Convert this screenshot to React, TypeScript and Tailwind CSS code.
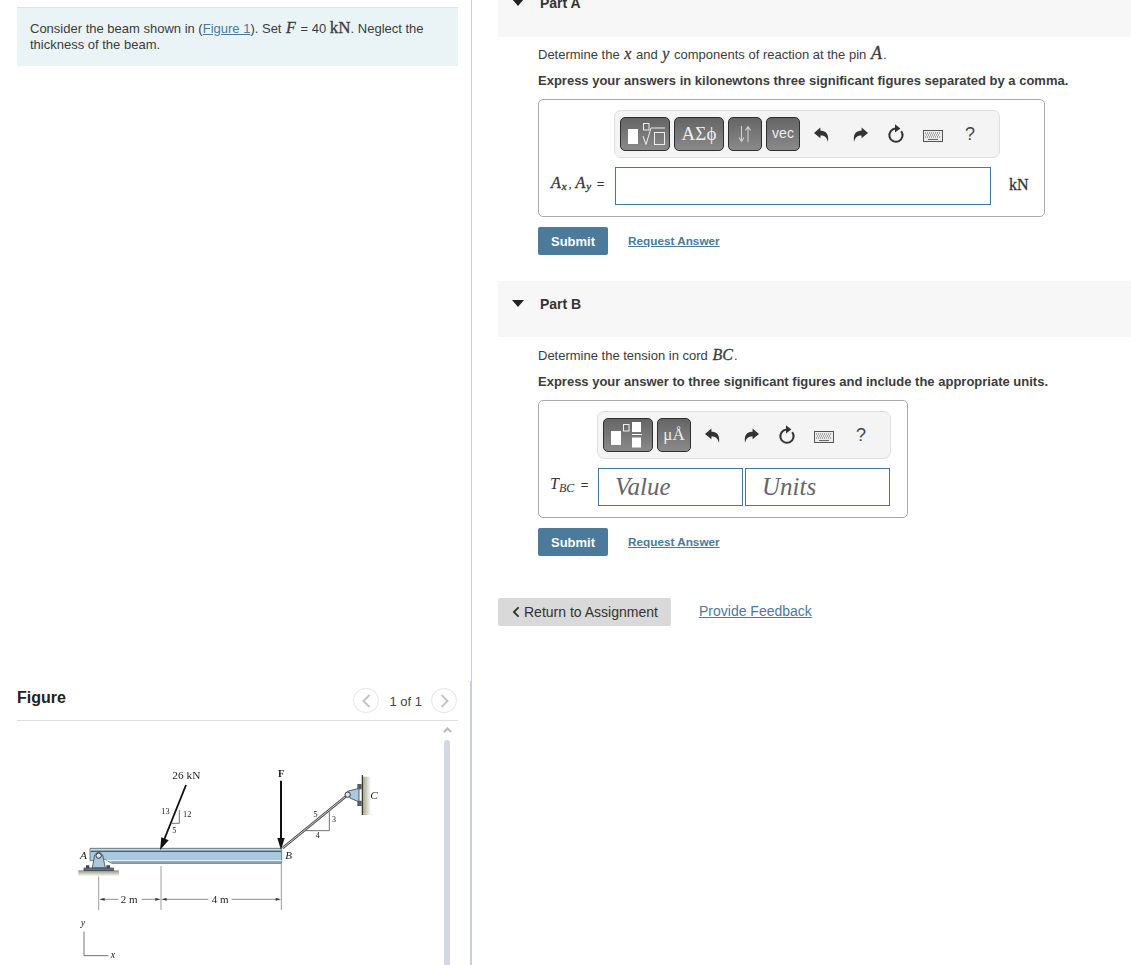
import React from "react";
import { FaChevronLeft } from "react-icons/fa";

const serif = "font-['Liberation_Serif',serif]";

function M({ children }: { children: React.ReactNode }) {
  return (
    <span className="font-['Liberation_Serif',serif] italic text-[16px] leading-[0] [-webkit-text-stroke:0.3px] mx-[1px]">
      {children}
    </span>
  );
}

function ToolBtn({ w, children }: { w: string; children: React.ReactNode }) {
  return (
    <div
      className={`${w} h-[34px] shrink-0 rounded-[5px] border border-[#2e2e2e] bg-linear-to-b from-[#656565] to-[#8a8a8a] flex items-center justify-center text-[#eeeeee]`}
    >
      {children}
    </div>
  );
}

function UndoIcon({ flip }: { flip?: boolean }) {
  return (
    <svg width="15" height="15" viewBox="0 0 14 14" className={flip ? "-scale-x-100" : ""}>
      <path d="M0 5.5L6 0.5V3.5C11 3.5 14.2 6.5 13 13.7C12 9.8 10 8 6 8V10.5Z" fill="#333" />
    </svg>
  );
}

function ResetIcon() {
  return (
    <svg width="18" height="20" viewBox="0 0 18 20">
      <path d="M8.5 4.6A6.6 6.6 0 1 0 14.2 7.2" fill="none" stroke="#333" strokeWidth="2" />
      <path d="M8 0.3L13.4 4.5L8 8.5Z" fill="#333" />
    </svg>
  );
}

function KeyboardIcon() {
  return (
    <svg width="20" height="12" viewBox="0 0 20 12" className="mt-[3px]">
      <rect x="0.5" y="0.5" width="19" height="11" fill="#ececec" stroke="#555" />
      <path d="M2 3h16M3 5h14M2 7h16" stroke="#666" strokeWidth="1" strokeDasharray="1 1" />
      <path d="M5 9.5h10" stroke="#666" strokeWidth="1" />
    </svg>
  );
}

function ToolIcons() {
  return (
    <div className="flex items-center -ml-[2px]">
      <div className="w-[38px] flex justify-center">
        <UndoIcon />
      </div>
      <div className="w-[40px] flex justify-center">
        <UndoIcon flip />
      </div>
      <div className="w-[32px] flex justify-center">
        <ResetIcon />
      </div>
      <div className="w-[42px] flex justify-center">
        <KeyboardIcon />
      </div>
      <div className="w-[32px] flex justify-center text-[18px] leading-none text-[#444]">?</div>
    </div>
  );
}

function Toolbar({ w, ml, children }: { w: string; ml: string; children: React.ReactNode }) {
  return (
    <div className={`${w} ${ml} h-[48px] rounded-[7px] border border-[#dfdfdf] bg-[#f4f4f4] flex items-center gap-[4px] pl-[5px]`}>
      {children}
    </div>
  );
}

function ActionRow() {
  return (
    <div className="flex items-center mt-[10px] h-[28px]">
      <div className="w-[70px] h-[28px] pt-[1px] rounded-[2px] bg-[#4b7a9b] text-white text-[13px] font-bold flex items-center justify-center">
        Submit
      </div>
      <a className="ml-[20px] text-[11.75px] font-bold text-[#4b7a9b] underline">Request Answer</a>
    </div>
  );
}

function PartHeader({ label, top }: { label: string; top?: boolean }) {
  return (
    <div className={`ml-[26px] bg-[#f7f7f7] flex items-start pl-[14px] pt-[15px] ${top ? "h-[57px] -mt-[20px]" : "h-[56px] mt-[26px]"}`}>
      <svg width="12" height="7" viewBox="0 0 12 7" className="mt-[4px]">
        <path d="M0 0H12L6 7Z" fill="#222" />
      </svg>
      <span className="ml-[16px] text-[14px] leading-[17px] font-bold text-[#333]">{label}</span>
    </div>
  );
}

function Figure() {
  const dim = "#555";
  return (
    <svg width="340" height="205" viewBox="0 0 1020 615" className="blur-[0.35px] shrink-0">
      <defs>
        <linearGradient id="gr" x1="0" y1="0" x2="0" y2="1">
          <stop offset="0" stopColor="#8f9078" />
          <stop offset="1" stopColor="#ffffff" />
        </linearGradient>
        <linearGradient id="wl" x1="0" y1="0" x2="1" y2="0">
          <stop offset="0" stopColor="#a8a88e" />
          <stop offset="1" stopColor="#ffffff" />
        </linearGradient>
      </defs>
      <path d="M116 335V450M303 318V450M664 312V450" stroke="#8a8a8a" strokeWidth="2.5" fill="none" />
      <path d="M122 418H175M245 418H295M312 418H445M515 418H658" stroke={dim} strokeWidth="2" fill="none" />
      <path d="M118 418l16 -4v8zM302 418l-16 -4v8zM304 418l16 -4v8zM663 418l-16 -4v8z" fill="#333" />
      <rect x="55" y="331" width="122" height="18" fill="url(#gr)" />
      <path d="M90 265H665V310H155L135 298H104V302H90Z" fill="#a9c9de" stroke="#66808f" strokeWidth="3" />
      <rect x="92" y="267" width="573" height="5" fill="#c9d5dc" />
      <rect x="92" y="272" width="573" height="4" fill="#3f6176" />
      <rect x="140" y="300" width="525" height="3" fill="#e3eef5" />
      <rect x="155" y="304" width="510" height="6" fill="#8f9fa9" />
      <path d="M97 324L104 285Q116 270 128 285L136 324Z" fill="#a9c9de" stroke="#445" strokeWidth="2.5" />
      <circle cx="116" cy="287" r="8" fill="#dfe8ee" stroke="#333" strokeWidth="3" />
      <rect x="72" y="324" width="88" height="8" fill="#5f7482" stroke="#334" strokeWidth="2" />
      <path d="M78 324v-8h10v8zM139 324v-8h11v8z" fill="#445" />
      <path d="M378 75L312 240" stroke="#111" strokeWidth="5.5" />
      <path d="M300 270L304 232L326 241Z" fill="#111" />
      <path d="M358 150V190H335" stroke="#555" strokeWidth="2.5" fill="none" />
      <path d="M663 62V240" stroke="#111" strokeWidth="6" />
      <path d="M663 270L652 234H674Z" fill="#111" />
      <path d="M668 264L860 107" stroke="#555" strokeWidth="8" />
      <path d="M668 264L860 107" stroke="#d8d8d8" strokeWidth="2.5" />
      <path d="M808 155V212H737" stroke="#555" strokeWidth="2.5" fill="none" />
      <rect x="909" y="50" width="24" height="115" fill="url(#wl)" />
      <path d="M907 45V165" stroke="#222" strokeWidth="3.5" />
      <path d="M862 94L897 85V126L870 114Z" fill="#a9c9de" stroke="#445" strokeWidth="2.5" />
      <path d="M892 72h13v16h-13zM892 122h13v16h-13z" fill="#4f5f6a" />
      <circle cx="863" cy="104" r="8" fill="#dfe8ee" stroke="#333" strokeWidth="3" />
      <path d="M72 515V587H145" stroke="#555" strokeWidth="2.5" fill="none" />
      <g className="font-['Liberation_Serif',serif]" fill="#222">
        <text x="337" y="56" fontSize="34">26 kN</text>
        <text x="654" y="50" fontSize="31" fontWeight="bold">F</text>
        <text x="304" y="162" fontSize="25">13</text>
        <text x="369" y="171" fontSize="25">12</text>
        <text x="337" y="218" fontSize="25">5</text>
        <text x="760" y="171" fontSize="26">5</text>
        <text x="816" y="187" fontSize="24">3</text>
        <text x="767" y="233" fontSize="24">4</text>
        <text x="60" y="298" fontSize="34" fontStyle="italic">A</text>
        <text x="676" y="296" fontSize="33" fontStyle="italic">B</text>
        <text x="931" y="116" fontSize="34" fontStyle="italic">C</text>
        <text x="182" y="429" fontSize="33">2 m</text>
        <text x="455" y="429" fontSize="33">4 m</text>
        <text x="62" y="497" fontSize="30" fontStyle="italic">y</text>
        <text x="152" y="594" fontSize="30" fontStyle="italic">x</text>
      </g>
    </svg>
  );
}

function Circle({ children }: { children: React.ReactNode }) {
  return (
    <div className="w-[26px] h-[25px] rounded-full border border-[#e4e4e4] flex items-center justify-center">
      {children}
    </div>
  );
}

export default function App() {
  return (
    <div className="w-[1131px] h-[965px] overflow-hidden flex bg-white font-['Liberation_Sans',Arial,sans-serif] text-[#333]">
      {/* left column */}
      <div className="w-[472px] h-full shrink-0 border-r border-[#c5cfde] pt-[7px] pl-[17px]">
        <div className="w-[441px] h-[59px] border-t border-[#dde3e6] bg-[#eaf4f6] pl-[13px] pt-[13px] pr-[20px] text-[13px] leading-[16px] text-[#3c3c3c]">
          Consider the beam shown in (<a className="text-[#4b7a9b] underline">Figure 1</a>). Set <M>F</M> = 40{" "}
          <span className={`${serif} text-[17px] leading-[0] [-webkit-text-stroke:0.3px]`}>kN</span>. Neglect the thickness of the
          beam.
        </div>
        <div className="w-[454px] mt-[615px] border-r border-[#c5cfde] h-[284px]">
          <div className="w-[441px] h-[40px] flex items-start border-b border-[#dddddd]">
            <div className="text-[16px] leading-[18px] font-bold text-[#222] mt-[8px]">Figure</div>
            <div className="ml-auto mr-[1px] flex items-center mt-[7px] text-[13px] text-[#444]">
              <Circle>
                <svg width="9" height="14" viewBox="0 0 9 14"><path d="M7.5 1L1.5 7L7.5 13" fill="none" stroke="#c4c4c4" strokeWidth="2" /></svg>
              </Circle>
              <span className="ml-[10px] mr-[9px] mt-[2px]">1 of 1</span>
              <Circle>
                <svg width="9" height="14" viewBox="0 0 9 14"><path d="M1.5 1L7.5 7L1.5 13" fill="none" stroke="#c4c4c4" strokeWidth="2" /></svg>
              </Circle>
            </div>
          </div>
          <div className="flex items-start">
            <div className="ml-[43px] mt-[39px]">
              <Figure />
            </div>
            <div className="ml-[42px] flex flex-col items-center w-[10px] h-[244px] overflow-hidden">
              <svg width="9" height="6" viewBox="0 0 9 6" className="mt-[6px] shrink-0"><path d="M1 5L4.5 1.5L8 5" fill="none" stroke="#b9b9b9" strokeWidth="2" /></svg>
              <div className="w-[6px] h-[240px] shrink-0 mt-[7px] rounded-t-[3px] bg-[#d2d9e4]" />
            </div>
          </div>
        </div>
      </div>

      {/* right column */}
      <div className="flex-1 min-w-0">
        <PartHeader label="Part A" top />
        <div className="ml-[66px]">
          <p className="mt-[10px] text-[13px] leading-[16px] text-[#3c3c3c]">
            Determine the <M>x</M> and <M>y</M> components of reaction at the pin <M><span className="text-[18px] leading-[0]">A</span></M>.
          </p>
          <p className="mt-[10px] text-[13px] leading-[16px] font-bold text-[#3c3c3c]">
            Express your answers in kilonewtons three significant figures separated by a comma.
          </p>
          <div className="mt-[10px] w-[507px] h-[118px] rounded-[5px] border border-[#a9a9a9] pt-[10px]">
            <Toolbar w="w-[386px]" ml="ml-[75px]">
              <ToolBtn w="w-[50px]">
                <svg width="48" height="32" viewBox="0 0 48 32">
                  <rect x="7" y="11" width="10" height="15" fill="#fff" />
                  <rect x="22.5" y="5.5" width="5.5" height="6.5" fill="none" stroke="#eee" />
                  <path d="M22 18L25 26.5L30 10H44" fill="none" stroke="#eee" />
                  <rect x="33.5" y="14.5" width="10" height="12" fill="none" stroke="#eee" />
                </svg>
              </ToolBtn>
              <ToolBtn w="w-[50px]">
                <span className={`${serif} text-[19px]`}>ΑΣϕ</span>
              </ToolBtn>
              <ToolBtn w="w-[34px]">
                <svg width="16" height="18" viewBox="0 0 16 18">
                  <path d="M4.5 1V16M2 12.5L4.5 16.5L7 12.5M11 17V2M8.5 5.5L11 1.5L13.5 5.5" fill="none" stroke="#cfcfcf" strokeWidth="1.1" />
                </svg>
              </ToolBtn>
              <ToolBtn w="w-[34px]">
                <span className="text-[14px] -mt-[1px]">vec</span>
              </ToolBtn>
              <ToolIcons />
            </Toolbar>
            <div className="flex items-center mt-[9px] h-[38px]">
              <div className="w-[76px] pl-[12px] text-[13px] leading-[16px] -mt-[5px] whitespace-nowrap">
                <span className={`${serif} italic text-[16px] leading-[0] [-webkit-text-stroke:0.3px]`}>
                  A<sub className="text-[11px] pl-[1px]">x</sub>
                  <span className="text-[11px] ml-[2px] mr-[4px]">,</span>
                  A<sub className="text-[11px] pl-[1px]">y</sub>
                </span>
                <span className="ml-[2px]"> =</span>
              </div>
              <div className="w-[376px] h-[38px] border border-[#47789a] bg-white" />
              <span className={`ml-[18px] -mt-[2px] ${serif} text-[16px] [-webkit-text-stroke:0.3px]`}>kN</span>
            </div>
          </div>
          <ActionRow />
        </div>

        <PartHeader label="Part B" />
        <div className="ml-[66px]">
          <p className="mt-[11px] text-[13px] leading-[16px] text-[#3c3c3c]">
            Determine the tension in cord <M>BC</M>.
          </p>
          <p className="mt-[10px] text-[13px] leading-[16px] font-bold text-[#3c3c3c]">
            Express your answer to three significant figures and include the appropriate units.
          </p>
          <div className="mt-[10px] w-[370px] h-[118px] rounded-[5px] border border-[#a9a9a9] pt-[10px]">
            <Toolbar w="w-[294px]" ml="ml-[58px]">
              <ToolBtn w="w-[50px]">
                <svg width="48" height="32" viewBox="0 0 48 32">
                  <rect x="7" y="12" width="10" height="14" fill="#fff" />
                  <rect x="19.5" y="5.5" width="5.5" height="6.5" fill="none" stroke="#eee" />
                  <rect x="28" y="3" width="9" height="10" fill="#fff" />
                  <rect x="28" y="15" width="10" height="1" fill="#fff" />
                  <rect x="28" y="18.5" width="9" height="10" fill="#fff" />
                </svg>
              </ToolBtn>
              <ToolBtn w="w-[34px]">
                <span className={`${serif} text-[17px]`}>μÅ</span>
              </ToolBtn>
              <ToolIcons />
            </Toolbar>
            <div className="flex items-center mt-[9px] h-[38px]">
              <div className="w-[59px] pl-[11px] text-[13px] leading-[16px] -mt-[4px] whitespace-nowrap">
                <span className={`${serif} italic text-[16px] leading-[0]`}>T<sub className="text-[12px]">BC</sub></span>
                <span className="ml-[3px]"> =</span>
              </div>
              <div className={`w-[145px] h-[38px] border border-[#47789a] flex items-center pl-[16px] ${serif} italic text-[25px] text-[#666]`}>Value</div>
              <div className={`ml-[2px] w-[145px] h-[38px] border border-[#47789a] flex items-center pl-[16px] ${serif} italic text-[25px] text-[#666]`}>Units</div>
            </div>
          </div>
          <ActionRow />
        </div>

        <div className="ml-[26px] mt-[42px] flex items-center h-[28px]">
          <div className="w-[173px] h-[28px] rounded-[2px] bg-[#d9d9d9] flex items-center pl-[12px] text-[14px] text-[#333]">
            <FaChevronLeft size={12} className="mr-[2px]" />
            Return to Assignment
          </div>
          <a className="ml-[28px] -mt-[2px] text-[14px] text-[#4b7a9b] underline">Provide Feedback</a>
        </div>
      </div>
    </div>
  );
}
